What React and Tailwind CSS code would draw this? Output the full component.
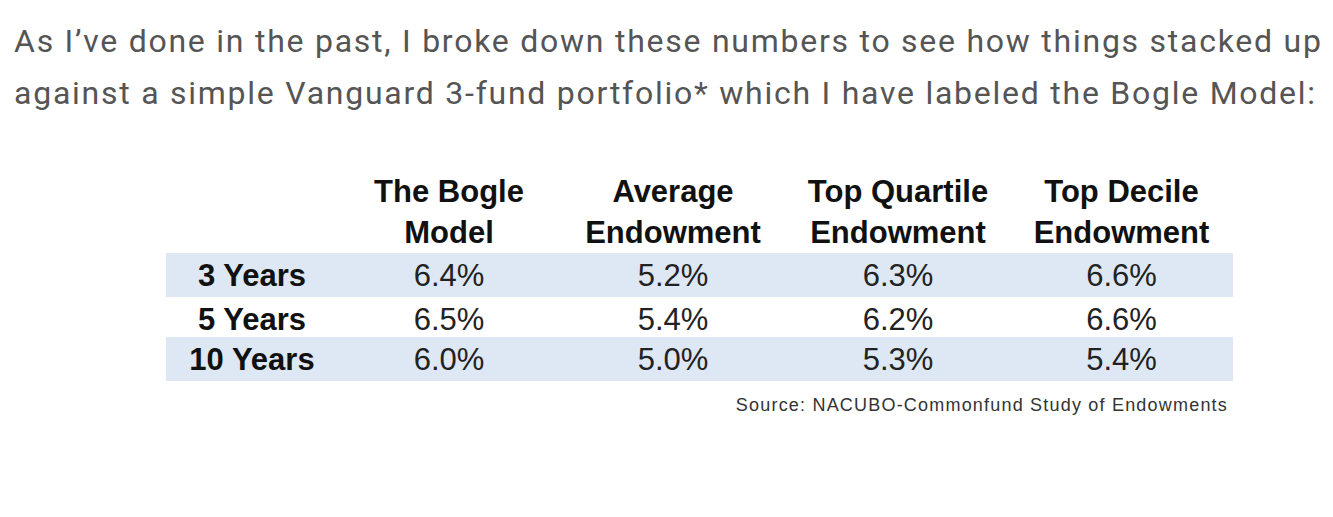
import React from "react";

const rows = [
  ["3 Years", "6.4%", "5.2%", "6.3%", "6.6%", true, "h-[44px]"],
  ["5 Years", "6.5%", "5.4%", "6.2%", "6.6%", false, "h-[40px]"],
  ["10 Years", "6.0%", "5.0%", "5.3%", "5.4%", true, "h-[44px]"],
];

const cols = "grid grid-cols-[172px_222px_226px_224px_223px]";

export default function App() {
  return (
    <div className="w-[1333px] h-[517px] bg-white overflow-hidden">
      <p
        className="pt-[15px] pl-[14px] text-[32px] leading-[52px] tracking-[1.75px] text-[#555555] whitespace-nowrap"
        style={{ fontFamily: "Roboto, sans-serif" }}
      >
        As I’ve done in the past, I broke down these numbers to see how things stacked up
        <br />
        against a simple Vanguard 3-fund portfolio* which I have labeled the Bogle Model:
      </p>
      <div
        className="ml-[166px] mt-[52px] w-[1067px] text-[#111111]"
        style={{ fontFamily: "'Liberation Sans', Arial, sans-serif" }}
      >
        <div className={`${cols} text-[31px] leading-[41px] font-bold text-center`}>
          <div />
          <div>The Bogle<br />Model</div>
          <div>Average<br />Endowment</div>
          <div>Top Quartile<br />Endowment</div>
          <div>Top Decile<br />Endowment</div>
        </div>
        {rows.map(([label, a, b, c, d, shaded, h]) => (
          <div
            key={label}
            className={`${cols} ${h} items-center text-center text-[31px] ${shaded ? "bg-[#dde8f4]" : "bg-white"}`}
          >
            <div className="font-bold">{label}</div>
            <div className="text-[#222222]">{a}</div>
            <div className="text-[#222222]">{b}</div>
            <div className="text-[#222222]">{c}</div>
            <div className="text-[#222222]">{d}</div>
          </div>
        ))}
        <div className="flex justify-end pr-[5px] pt-[14px] text-[18px] leading-[20px] tracking-[1.2px] text-[#333333]">
          Source: NACUBO-Commonfund Study of Endowments
        </div>
      </div>
    </div>
  );
}
